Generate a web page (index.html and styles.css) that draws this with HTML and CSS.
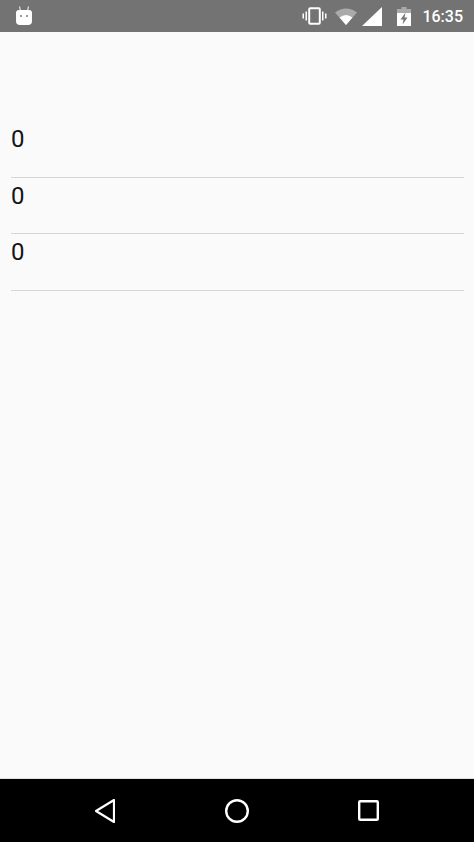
FILE: index.html
```html
<!DOCTYPE html>
<html lang="en">
<head>
  <meta charset="UTF-8" />
  <title>Counters</title>
  <link rel="stylesheet" href="styles.css">
</head>
<body>
  <div class="status-bar">
    <svg width="16" height="20" viewBox="0 0 16 20">
      <path d="M3.500 0.500 L4.500 5 M12.500 0.500 L11.500 5" stroke="#ddd" stroke-width="1.200" fill="none"/>
      <path d="M3 4 H13 Q16 4 16 7 V15 Q16 19 12 19 H4 Q0 19 0 15 V7 Q0 4 3 4 Z" fill="#fff"/>
      <circle cx="5" cy="10" r="1" fill="#777"/>
      <circle cx="11" cy="10" r="1" fill="#777"/>
    </svg>
    <div class="status-icons">
      <svg width="25" height="18" viewBox="0 0 25 18">
        <rect x="7.200" y="1.200" width="10.600" height="15.600" rx="1" fill="none" stroke="#fff" stroke-width="2"/>
        <path d="M3.500 4.500 H5 V13.500 H3.500 Z M0.500 6.500 H2 V11.500 H0.500 Z M20 4.500 H21.500 V13.500 H20 Z M23 6.500 H24.500 V11.500 H23 Z" fill="#fff"/>
      </svg>
      <svg class="wifi" width="22" height="17" viewBox="0 0 22 17">
        <path d="M0 4.500 Q11 -3.500 22 4.500 L11 17 Z" fill="#aaa"/>
        <path d="M4.500 9.500 Q11 4.500 17.500 9.500 L11 17 Z" fill="#fff"/>
      </svg>
      <svg class="signal" width="20" height="19" viewBox="0 0 20 19">
        <path d="M0 19 L20 0 V19 Z" fill="#fff"/>
      </svg>
      <svg class="battery" width="14" height="19" viewBox="0 0 14 19">
        <path d="M4.500 0 H9.500 V2 H14 V6 H0 V2 H4.500 Z" fill="#aaa"/>
        <path d="M0 6 H14 V19 H0 Z" fill="#fff"/>
        <path d="M8.500 5.500 L3.500 12.500 H6.500 L5.500 17.500 L10.500 10.500 H7.500 Z" fill="#777"/>
      </svg>
      <span class="clock">16:35</span>
    </div>
  </div>

  <div class="content">
    <div class="counter">0</div>
    <div class="counter">0</div>
    <div class="counter">0</div>
  </div>

  <div class="nav-bar">
    <svg width="20" height="24" viewBox="0 0 20 24">
      <path d="M19 1 V23 L1 12 Z" fill="none" stroke="#fff" stroke-width="2.200" stroke-linejoin="round"/>
    </svg>
    <svg width="24" height="24" viewBox="0 0 24 24">
      <circle cx="12" cy="12" r="10.800" fill="none" stroke="#fff" stroke-width="2.400"/>
    </svg>
    <svg width="21" height="21" viewBox="0 0 21 21">
      <rect x="1.200" y="1.200" width="18.600" height="18.600" rx="1" fill="none" stroke="#fff" stroke-width="2.400"/>
    </svg>
  </div>
</body>
</html>
```

FILE: styles.css
```css
* {
  box-sizing: border-box;
}
body {
  margin: 0;
  height: 842px;
  display: flex;
  flex-direction: column;
  overflow: hidden;
  background: #fafafa;
  font-family: Roboto, sans-serif;
}

.status-bar {
  height: 32px;
  flex: none;
  display: flex;
  align-items: center;
  justify-content: space-between;
  padding: 0 11px 0 16px;
  background: #737373;
  color: #ffffff;
}

.status-icons {
  display: flex;
  align-items: center;
}
.wifi {
  margin-left: 8px;
}
.signal {
  margin-left: 5px;
}
.battery {
  margin-left: 15px;
}
.clock {
  margin-left: 11px;
  font-size: 16px;
  font-weight: 500;
}

.content {
  flex: 1;
  padding: 89px 10px 0 11px;
}

.counter {
  height: 56.500px;
  padding-top: 4px;
  font-size: 24px;
  line-height: 28px;
  color: #141414;
  border-bottom: 1px solid #d6d6d6;
}

.nav-bar {
  height: 64px;
  flex: none;
  display: flex;
  align-items: center;
  justify-content: space-between;
  padding: 0 95px;
  background: #000000;
  border-top: 1px solid #e0e0e0;
}
```
